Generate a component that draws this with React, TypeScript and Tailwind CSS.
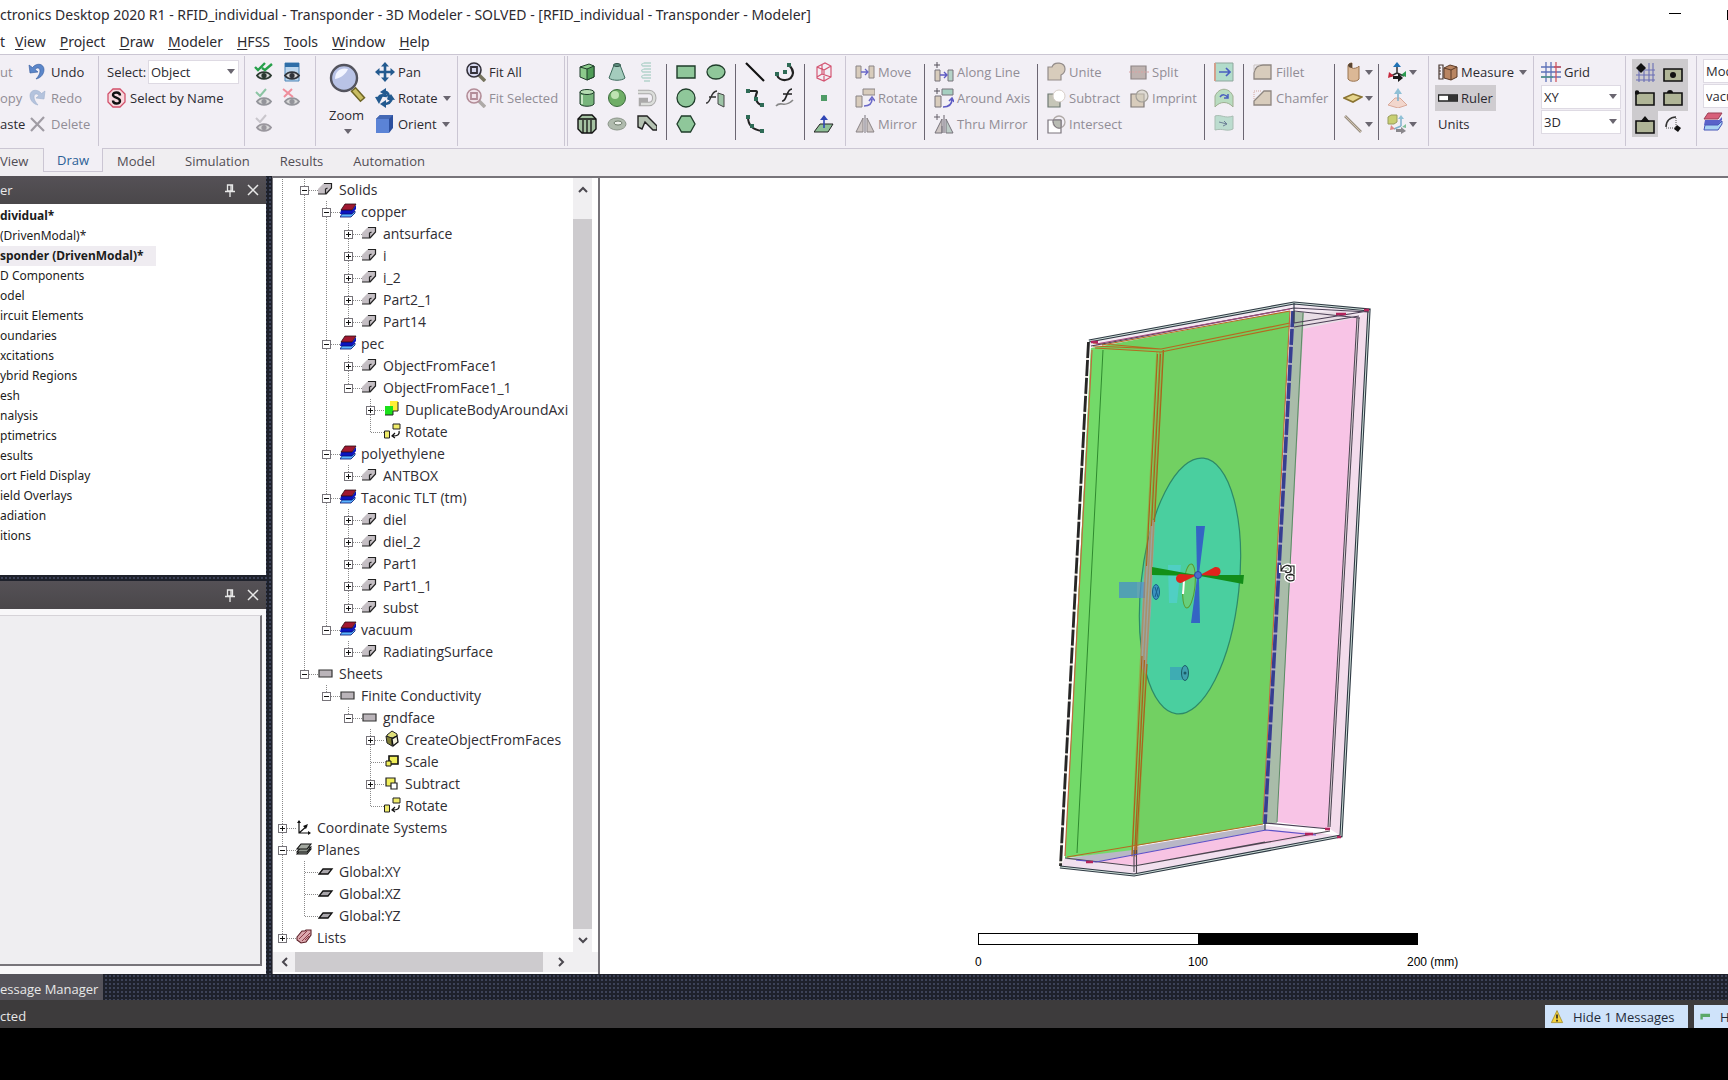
import { ReactNode } from 'react';
import clsx from 'clsx';

/* ---------- small helpers ---------- */

const Icon = ({ children, className = 'size-5' }: { children: ReactNode; className?: string }) => (
  <svg viewBox="0 0 20 20" className={clsx('shrink-0', className)} fill="none" aria-hidden="true">
    {children}
  </svg>
);

const Caret = ({ className = '' }: { className?: string }) => (
  <svg viewBox="0 0 8 5" className={clsx('h-[5px] w-2 shrink-0', className)} aria-hidden="true">
    <path d="M0 0h8L4 5z" fill="#6a6670" />
  </svg>
);

const Line = ({ dark }: { dark?: boolean }) => (
  <div className={clsx('w-px shrink-0', dark ? 'mt-[5px] h-[76px] bg-[#6b6672]' : '-mt-[3px] h-[90px] bg-[#cbc6d3]')} />
);

const Group = ({ className, children }: { className: string; children: ReactNode }) => (
  <div className={clsx('flex shrink-0', className)}>{children}</div>
);

const Col = ({ className = '', children }: { className?: string; children: ReactNode }) => (
  <div className={clsx('flex flex-col items-start', className)}>{children}</div>
);

type ToolProps = { icon?: ReactNode; label: string; muted?: boolean; caret?: boolean };

const Tool = ({ icon, label, muted, caret }: ToolProps) => (
  <button className={clsx('flex h-[26px] items-center gap-[3px] whitespace-nowrap', muted ? 'text-[#918d96]' : 'text-[#2c2a30]')}>
    {icon}
    <span>{label}</span>
    {caret && <Caret className="ml-0.5" />}
  </button>
);

const IconTool = ({ icon, label, caret }: { icon: ReactNode; label: string; caret?: boolean }) => (
  <button aria-label={label} className="flex h-[26px] items-center gap-0.5">
    {icon}
    {caret && <Caret />}
  </button>
);

const Combo = ({ label, value, className }: { label: string; value: string; className: string }) => (
  <div className={clsx('relative h-[25px]', className)}>
    <select aria-label={label} className="h-6 w-full appearance-none border border-[#dedae3] bg-white pl-0.5 text-[#2c2a30]">
      <option>{value}</option>
    </select>
    <Caret className="pointer-events-none absolute top-[9px] right-1" />
  </div>
);

/* ---------- ribbon icons ---------- */

const G = '#8fc79a';
const D = '#1f3d2a';

const undoIcon = (
  <Icon>
    <path d="M1 3l1 8 8-1-3-2.500c3-3 5-1 5 1.500 0 3-1.500 5-4 8 5-1 8-5 8-9.500C16 2 9 0 4.500 5.500z" fill="#5b86c9" stroke="#33599c" strokeWidth=".6" />
  </Icon>
);
const redoIcon = (
  <Icon>
    <path d="M17 3l-1 8-8-1 3-2.500c-3-3-5-1-5 1.500 0 3 1.500 5 4 8-5-1-8-5-8-9.500C2 2 9 0 13.500 5.500z" fill="#b4c3dd" stroke="#9fb0cc" strokeWidth=".6" />
  </Icon>
);
const deleteIcon = (
  <Icon>
    <path d="M3 4l13 13M16 3L3 17" stroke="#a09ca4" strokeWidth="2.200" />
  </Icon>
);
const byNameIcon = (
  <Icon>
    <path d="M6 1h7l5 5v8l-5 5H6l-5-5V6z" fill="#f7d9de" stroke="#d2506a" strokeWidth="1.300" />
    <path d="M13 7.500c0-4-7-4-7-.5 0 3 7 2.500 7 6 0 3.500-7 3.500-7-.5" stroke="#111" strokeWidth="2.400" />
  </Icon>
);

const Eye = ({ c }: { c: string }) => (
  <>
    <path d="M3 13.500c3-4.500 11-4.500 14 0-3 4.500-11 4.500-14 0z" fill="#d8d8d8" stroke={c} strokeWidth="1.900" />
    <circle cx="10" cy="13.500" r="2.600" fill={c} />
  </>
);
const showIcon = (
  <Icon>
    <Eye c="#2b3a30" />
    <path d="M1 5l3 3 7-7M8 6l3 2 7-6" stroke="#27a04a" strokeWidth="2.400" />
  </Icon>
);
const showMuted = (
  <Icon>
    <Eye c="#93949a" />
    <path d="M2 4l4 4 6-7" stroke="#8cc5a4" strokeWidth="2" />
  </Icon>
);
const hideMuted = (
  <Icon>
    <Eye c="#93949a" />
    <path d="M1 1l10 8M10 1L2 9" stroke="#ef8e9c" strokeWidth="2" />
  </Icon>
);
const showGrey = (
  <Icon>
    <Eye c="#9a979e" />
    <path d="M2 4l4 4 6-7" stroke="#c9c6cc" strokeWidth="2" />
  </Icon>
);
const windowEye = (
  <Icon>
    <path d="M3 1h14v18H3z" fill="#bcd6ee" stroke="#4d86b8" />
    <path d="M3 1h14v4H3z" fill="#2f6ea8" />
    <Eye c="#30343a" />
  </Icon>
);

const zoomIcon = (
  <svg viewBox="0 0 38 40" className="h-10 w-[38px]" fill="none" aria-hidden="true">
    <path d="M24 26l10 11" stroke="#6d6424" strokeWidth="7" />
    <path d="M25 27l8 9" stroke="#c9bd62" strokeWidth="4" />
    <circle cx="15" cy="15" r="13" fill="#b9c3e6" stroke="#54545e" strokeWidth="2.400" />
    <path d="M6 16C6 8 12 4 19 6c-2 5-7 9-13 10z" fill="#f3f5ff" />
  </svg>
);
const panIcon = (
  <Icon>
    <path d="M10 0l4 4.500h-2.700v4.200h4.200V6L20 10l-4.500 4v-2.700h-4.200v4.200H14L10 20l-4-4.500h2.700v-4.200H4.500V14L0 10l4.500-4v2.700h4.200V4.500H6z" fill="#235a8f" />
  </Icon>
);
const rotateIcon = (
  <Icon>
    <path d="M9 4c4 0 5 2 5 8M4 11c0-4 3-4 8-3M9 16c5 0 7-2 8-6" stroke="#235a8f" strokeWidth="2.800" />
    <path d="M5 4l6-4v8zM0 9l8-1-4 8zM12 11l4-5 4 6zM11 20l-6-4 6-4z" fill="#235a8f" />
  </Icon>
);
const orientIcon = (
  <Icon>
    <path d="M1 5l4-4h13v13l-4 5H1z" fill="#2c4f9e" />
    <path d="M1 5h13v14H1z" fill="#5b83d6" />
    <path d="M1 5l4-4h13l-4 4z" fill="#4569b5" />
  </Icon>
);
const FitIcon = ({ c, h, f }: { c: string; h: string; f: string }) => (
  <Icon>
    <path d="M12 12l7 7" stroke={h} strokeWidth="3.600" />
    <circle cx="8" cy="8" r="7" fill={f} stroke={c} strokeWidth="1.600" />
    <path d="M5 5h6v6H5z" stroke={c} strokeWidth="1.800" />
  </Icon>
);

const boxIcon = (
  <Icon>
    <path d="M3 5l9-3 5 2v11l-7 3-7-3z" fill="#8ccb8c" stroke={D} />
    <path d="M10 7l7-3v11l-7 3z" fill="#4f9c57" stroke={D} />
    <path d="M3 5l7 2" stroke={D} />
  </Icon>
);
const coneIcon = (
  <Icon>
    <path d="M7 3h6l5 13c-3 3-13 3-16 0z" fill="#a4ccbd" stroke="#3d6a5c" />
    <ellipse cx="10" cy="3" rx="3.500" ry="1.500" fill="#5f8f80" stroke="#2f5146" />
  </Icon>
);
const helixIcon = (
  <Icon>
    <path d="M7 1h7M5 4h9M7 7h7M5 10h9M7 13h7M5 16h9M7 19h6M7 1c-3 1-3 2-1 3M7 7c-3 1-3 2-1 3M7 13c-3 1-3 2-1 3" stroke="#b4d3cc" strokeWidth="1.300" />
  </Icon>
);
const cylinderIcon = (
  <Icon>
    <path d="M3 4v12c2 3 12 3 14 0V4z" fill="#78b57c" stroke={D} />
    <path d="M5 7v9" stroke="#c7e6c4" strokeWidth="2" />
    <ellipse cx="10" cy="4" rx="7" ry="2.500" fill="#b5dcb2" stroke={D} />
  </Icon>
);
const sphereIcon = (
  <Icon>
    <circle cx="10" cy="10" r="8.500" fill="#6fae66" stroke="#3b6b3c" />
    <circle cx="8" cy="7" r="4" fill="#bfe3b2" />
  </Icon>
);
const bendIcon = (
  <Icon>
    <path d="M1 4h11c7 0 7 12 0 12H4v-4h7" stroke="#aaa9a9" strokeWidth="4.500" />
    <path d="M1 4h11c7 0 7 12 0 12H4" stroke="#dcdedb" strokeWidth="2.500" />
  </Icon>
);
const polyIcon = (
  <Icon>
    <path d="M5 1h10l4 4v10l-4 4H5l-4-4V5z" fill="#a5c2a2" stroke="#111" strokeWidth="1.400" />
    <path d="M1 5h18M6 6v13M10 6v13M14 6v13" stroke="#111" strokeWidth="1.300" />
  </Icon>
);
const torusIcon = (
  <Icon>
    <ellipse cx="10" cy="10" rx="9" ry="6" fill="#b0bbae" stroke="#8c968a" />
    <ellipse cx="11" cy="9" rx="4" ry="2" fill="#eef1ec" stroke="#6d7b6b" />
  </Icon>
);
const sweepIcon = (
  <Icon>
    <path d="M1 2h9l10 10v4h-4L8 8l-3 7-4-2z" fill="#b4c1b1" stroke="#222" strokeWidth="1.400" />
  </Icon>
);
const rectIcon = (
  <Icon>
    <path d="M1 4h18v12H1z" fill={G} stroke={D} strokeWidth="1.400" />
  </Icon>
);
const ellipseIcon = (
  <Icon>
    <ellipse cx="10" cy="10" rx="9" ry="7" fill={G} stroke={D} strokeWidth="1.300" />
  </Icon>
);
const circleIcon = (
  <Icon>
    <circle cx="10" cy="10" r="9" fill={G} stroke={D} strokeWidth="1.300" />
  </Icon>
);
const funcSurfIcon = (
  <Icon>
    <path d="M0 15c5 1 4-12 11-12M3 9h7" stroke="#333" strokeWidth="1.400" />
    <path d="M12 5l6 2v12l-6-3z" fill="#9fc5a8" stroke="#444" />
  </Icon>
);
const hexIcon = (
  <Icon>
    <path d="M5.500 2h9L19 10l-4.500 8h-9L1 10z" fill={G} stroke={D} strokeWidth="1.300" />
  </Icon>
);
const lineIcon = (
  <Icon>
    <path d="M1 1l18 18" stroke="#111" strokeWidth="2.200" />
  </Icon>
);
const arcIcon = (
  <Icon>
    <path d="M2 13c2 7 15 7 16-2 0-4-2-6-4-8" stroke="#222" strokeWidth="2.200" />
    <path d="M0 10h4v4H0zM8 8h4v4H8zM12 1h4v4h-4z" fill="#2f6b56" />
  </Icon>
);
const splineIcon = (
  <Icon>
    <path d="M3 3h8c3 1-2 4 0 8 1 4 3 6 7 6" stroke="#222" strokeWidth="2.200" />
    <path d="M1 1h4v4H1zM9 9h4v4H9zM15 15h4v4h-4z" fill="#2f6b56" />
  </Icon>
);
const funcCurveIcon = (
  <Icon>
    <path d="M7 13c5 1 4-12 10-12M8 6h9" stroke="#222" strokeWidth="1.600" />
    <path d="M1 18c5-6 8 3 17-6" stroke="#888" strokeWidth="1.600" />
  </Icon>
);
const arc3Icon = (
  <Icon>
    <path d="M3 3c0 9 6 13 14 14" stroke="#222" strokeWidth="2" />
    <path d="M1 1h4v4H1zM5 10h4v4H5zM15 15h4v4h-4z" fill="#2f6b56" />
  </Icon>
);
const regionIcon = (
  <Icon>
    <path d="M3 5l8-4 6 3v11l-7 4-7-3zM3 5l7 3 7-4M10 8v11M3 15l5-3M8 3v9l9 3" stroke="#d45572" strokeWidth="1.200" />
  </Icon>
);
const pointIcon = (
  <Icon>
    <path d="M7 7h6v6H7z" fill="#4f9b66" />
  </Icon>
);
const planeIcon = (
  <Icon>
    <path d="M6 10h13l-5 8H0z" fill="#8fbf97" stroke="#222" />
    <path d="M10 14V4" stroke="#2f45b5" strokeWidth="1.600" />
    <path d="M6 6l4-5 4 5z" fill="#2f45b5" />
  </Icon>
);

const T = '#d8ccbc';
const moveIcon = (
  <Icon>
    <path d="M1 4h5v12H1zM14 4h5v12h-5z" fill={T} stroke="#8a8486" />
    <path d="M6 10h7M10 7l3 3-3 3" stroke="#6a68c8" strokeWidth="1.300" />
  </Icon>
);
const turnIcon = (
  <Icon>
    <path d="M1 8h6v11H1zM8 1h12v6H8z" fill={T} stroke="#8a8486" />
    <path d="M9 18c6 0 8-3 8-7M14 13l3-4 3 4" stroke="#6a68c8" strokeWidth="1.600" />
  </Icon>
);
const mirrorIcon = (
  <Icon>
    <path d="M8 4v14H1zM12 4v14h7z" fill="#cdc5c3" stroke="#8a8486" />
    <path d="M10 1v18" stroke="#77727a" />
  </Icon>
);
const alongIcon = (
  <Icon>
    <path d="M1 8h5v11H1z" fill={T} stroke="#77727a" />
    <path d="M14 8h5v11h-5z" fill="#b5d3c8" stroke="#77727a" />
    <path d="M3 0v6M0 3h6" stroke="#55505a" />
    <path d="M6 13h7M10 10l3 3-3 3" stroke="#5d5bc4" strokeWidth="1.400" />
  </Icon>
);
const aroundIcon = (
  <Icon>
    <path d="M1 8h6v11H1z" fill={T} stroke="#77727a" />
    <path d="M8 1h11v6H8z" fill="#a6cfc0" stroke="#77727a" />
    <path d="M3 0v6M0 3h6" stroke="#55505a" />
    <path d="M9 19c7 0 9-4 9-8M15 13l3-3 2 4" stroke="#5d5bc4" strokeWidth="1.600" />
  </Icon>
);
const thruIcon = (
  <Icon>
    <path d="M8 5v14H1zM8 12v7" fill="#cdc5c3" stroke="#77727a" />
    <path d="M12 5v14h7z" fill="#bccbc6" stroke="#77727a" />
    <path d="M10 1v18M3 0v6M0 3h6" stroke="#66616b" />
  </Icon>
);
const uniteIcon = (
  <Icon>
    <path d="M2 5h4c2-6 13-5 13 2 0 3-2 5-4 6v5H2z" fill={T} stroke="#938c8a" strokeWidth="1.200" />
  </Icon>
);
const subtractIcon = (
  <Icon>
    <path d="M2 6h6c-1 5 2 8 6 8v5H2z" fill="#c6c6b8" stroke="#6f7a74" strokeWidth="1.200" />
    <circle cx="13" cy="8" r="6" fill="#fff" stroke="#d8cfc8" />
  </Icon>
);
const intersectIcon = (
  <Icon>
    <path d="M2 6h13v13H2z" fill="#fff" stroke="#7b757d" strokeWidth="1.200" />
    <circle cx="13" cy="8" r="6" stroke="#b0aaa8" strokeWidth="1.300" />
    <path d="M7 6h8v8c-5 1-8-3-8-8z" fill="#b9bcb3" stroke="#7b757d" />
  </Icon>
);
const splitIcon = (
  <Icon>
    <path d="M2 4h15v13H2z" fill="#bfb3b0" stroke="#8e8586" strokeWidth="1.200" />
    <path d="M0 10h20" stroke="#d9a3a3" strokeDasharray="2 1" />
  </Icon>
);
const imprintIcon = (
  <Icon>
    <path d="M2 6h13v13H2z" fill={T} stroke="#7f7877" strokeWidth="1.200" />
    <circle cx="13" cy="8" r="6" fill="#d3cfc0" fillOpacity=".6" stroke="#a29f98" strokeWidth="1.200" />
  </Icon>
);
const faceMoveIcon = (
  <Icon>
    <path d="M1 1h18v18H1z" fill="#b2dccb" stroke="#8fa79d" />
    <path d="M1 1v18" stroke="#d3a08c" strokeWidth="2" />
    <path d="M5 10h11M12 6l4 4-4 4" stroke="#4a5fc0" strokeWidth="1.700" />
  </Icon>
);
const faceOffsetIcon = (
  <Icon>
    <path d="M1 8C5-1 15-1 19 8v11c-5-6-13-6-18 0z" fill="#b9dcc0" stroke="#9fae92" />
    <path d="M6 9c2-3 6-3 8 1M14 6v4h-4" stroke="#4a5fc0" strokeWidth="1.500" />
  </Icon>
);
const faceAlongIcon = (
  <Icon>
    <path d="M1 2c6-2 10 3 18 0v13c-6 3-10-1-18 1z" fill="#bcdccf" stroke="#a9bdb3" />
    <path d="M5 8l8 2M10 7l3 3-4 2" stroke="#6c7f96" />
  </Icon>
);
const filletIcon = (
  <Icon>
    <path d="M1 17V11c1-6 5-8 9-8h8v14z" fill={T} stroke="#8e8680" strokeWidth="1.300" />
    <path d="M1 9V3h6" stroke="#c9c2c0" />
  </Icon>
);
const chamferIcon = (
  <Icon>
    <path d="M1 17v-4L11 3h7v14z" fill={T} stroke="#8e8680" strokeWidth="1.300" />
    <path d="M1 11V3h8" stroke="#d3a9a0" strokeDasharray="1 1" />
  </Icon>
);
const tubeIcon = (
  <Icon>
    <path d="M5 4v13c2 3 9 3 11 0V4c-1 2-6 3-7 2V1c-2 0-4 1-4 3z" fill="#dbb896" stroke="#9a7450" />
    <path d="M5 3c1-2 3-2 4-2v5c-2 0-4-1-4-3z" fill="#5a4634" />
  </Icon>
);
const sheetIcon = (
  <Icon>
    <path d="M1 10l9-4 9 3-9 5z" fill="#e6d58c" stroke="#8b7432" strokeWidth="1.600" />
  </Icon>
);
const wireIcon = (
  <Icon>
    <path d="M2 2l16 16" stroke="#9a8f83" strokeWidth="2.600" />
    <path d="M2 2l16 16" stroke="#cfc3ae" />
  </Icon>
);
const csIcon = (
  <Icon>
    <path d="M10 11V3M10 11l-6 3M10 11l7 3" stroke="#333" strokeWidth="1.500" />
    <path d="M6 5l4-5 4 5z" fill="#1f72b5" />
    <path d="M1 16l1-6 5 4z" fill="#c7283c" />
    <path d="M19 15V9l-5 4z" fill="#2b9a50" />
    <path d="M6 14h5v-3l5 5-5 4v-3H6z" fill="#1a1a1a" />
  </Icon>
);
const csMuted = (
  <Icon>
    <path d="M1 17l7-7h5l7 7-9 3z" fill="#f2d6cc" stroke="#d9a898" />
    <path d="M11 13V4" stroke="#7fb1cc" strokeWidth="1.600" />
    <path d="M7 6l4-6 4 6z" fill="#8fc0d6" />
  </Icon>
);
const csFaceIcon = (
  <Icon>
    <path d="M1 3l3-2h6v7l-3 2H1z" fill="#c8cf72" stroke="#989b5e" />
    <path d="M14 12V4M14 12l-7 3" stroke="#7fb1cc" strokeWidth="1.500" />
    <path d="M11 5l3-4 3 4z" fill="#8fc0d6" />
    <path d="M9 15h5v-2l5 4-5 3v-2H9z" fill="#8a878c" />
    <path d="M3 16l1-5 4 4z" fill="#d88" />
    <path d="M19 14v-4l-4 3z" fill="#7fc09a" />
  </Icon>
);
const measureIcon = (
  <Icon>
    <path d="M1 3h4v14H1zM1 6h2M1 9h2M1 12h2" stroke="#4b3b34" strokeWidth="1.200" />
    <path d="M6 6l6-3 7 2v10l-6 3-7-2z" fill="#b98562" stroke="#5b3b28" />
    <path d="M6 6l7 2 6-3M13 8v10" stroke="#5b3b28" />
  </Icon>
);
const rulerIcon = (
  <Icon>
    <path d="M.5 7h19v6H.5z" fill="#fff" stroke="#222" strokeWidth="1.400" />
    <path d="M10 7h9.500v6H10z" fill="#333" />
  </Icon>
);
const gridIcon = (
  <Icon>
    <path d="M0 5h20M0 10h20M0 15h20" stroke="#5d72b8" strokeWidth="1.300" />
    <path d="M5 0v20M10 0v20" stroke="#5d72b8" strokeWidth="1.300" />
    <path d="M15 0v20M13 5h7" stroke="#cf5560" strokeWidth="1.300" />
    <path d="M0 15h12" stroke="#4c9a7c" strokeWidth="1.300" />
  </Icon>
);
const stackIcon = (
  <Icon>
    <path d="M5 1h14l-4 6H1z" fill="#d8607a" stroke="#9b4056" />
    <path d="M2 8h14l3-3v3l-4 5H1z" fill="#5a62c9" />
    <path d="M2 13h13l4-4v3l-4 6H1z" fill="#a8d2f2" stroke="#4656b8" />
  </Icon>
);

const snapBox = <path d="M1 5h18v12H1z" fill="#b0b597" stroke="#111" strokeWidth="1.600" />;
const snapGrid = (
  <Icon>
    <path d="M1 13h19M1 18h19M4 8v12M9 4v16M14 1v19M18 1v19M10 8h10" stroke="#6a6fb5" strokeWidth="1.100" />
    <path d="M6 1l5 5-5 5-5-5z" fill="#111" />
  </Icon>
);
const snapCenter = (
  <Icon>
    <path d="M1 7h18v12H1z" fill="#b0b597" stroke="#111" strokeWidth="1.600" />
    <circle cx="10" cy="13" r="3" fill="#111" />
  </Icon>
);
const snapVertex = (
  <Icon>
    {snapBox}
    <circle cx="2" cy="4.500" r="2.200" fill="#111" />
  </Icon>
);
const snapEdge = (
  <Icon>
    {snapBox}
    <path d="M4 5a3 3 0 0 1 6 0z" fill="#111" />
  </Icon>
);
const snapMid = (
  <Icon>
    <path d="M1 7h18v12H1z" fill="#b0b597" stroke="#111" strokeWidth="1.600" />
    <path d="M5 8l5-6 5 6z" fill="#111" />
  </Icon>
);
const snapArc = (
  <Icon>
    <path d="M3 13C3 7 7 3 13 3" stroke="#333" strokeWidth="1.500" />
    <path d="M3 14h9M13 4v9" stroke="#555" strokeDasharray="1 1" />
    <path d="M14 11l4 3-3 4-4-3z" fill="#111" />
  </Icon>
);

/* ---------- tree ---------- */

const solidIcon = (
  <Icon>
    <path d="M0 14V9l6-6h8v5l-6 6z" fill="#c5bfc4" />
    <path d="M6 3.500h7.500V8L8 14M0 14h8M7.500 14V9l2-1" stroke="#222" strokeWidth="1.200" />
  </Icon>
);
const materialIcon = (
  <Icon>
    <path d="M1 8h11l4-5v4l-4 5H0z" fill="#0b14c0" />
    <path d="M5 2h11l-4 6H1z" fill="#a01830" stroke="#2b0a12" strokeWidth=".8" />
    <path d="M2 12h10l3-3v2l-4 4H0z" fill="#5cb4ff" stroke="#061070" strokeWidth=".8" />
  </Icon>
);
const sheetRowIcon = (
  <Icon>
    <path d="M1 6h13v7H1z" fill="#bab4b9" stroke="#333" strokeWidth="1.200" />
  </Icon>
);
const duplicateIcon = (
  <Icon>
    <path d="M6 1h8v10H6z" fill="#ffee33" />
    <path d="M1 6h8v9H1z" fill="#1be01b" />
    <path d="M1 15h8v-4h5V2" stroke="#222" />
  </Icon>
);
const rotateRowIcon = (
  <Icon>
    <path d="M0.500 9h5v7h-5zM9 2h7v5H9z" fill="#f0ec6a" stroke="#222" />
    <path d="M15 9c1 4-2 5-6 5M11 11l-3 3 3 2" stroke="#111" strokeWidth="1.200" />
  </Icon>
);
const facesIcon = (
  <Icon>
    <path d="M3 5l5-4 5 3v2L8 8 3 7z" fill="#dfe07a" stroke="#222" />
    <path d="M2 6l6 2v8l-5-3z" fill="#7d7c35" stroke="#222" />
    <path d="M8 9l5-3 1 6-5 4z" fill="#f3f2dc" stroke="#111" strokeWidth="1.300" />
  </Icon>
);
const scaleIcon = (
  <Icon>
    <path d="M5 4h9v8H5z" fill="#f0ee5a" stroke="#111" strokeWidth="1.600" />
    <path d="M2 9h5v5H2z" fill="#f0ee5a" stroke="#111" />
  </Icon>
);
const subtractRowIcon = (
  <Icon>
    <path d="M2 4h9v8H2z" fill="#f0ee5a" stroke="#222" strokeWidth="1.200" />
    <path d="M7 9h6v6H7z" fill="#fff" stroke="#222" strokeWidth="1.200" />
  </Icon>
);
const axesIcon = (
  <Icon>
    <path d="M3 3v12h11M3 15l8-7" stroke="#111" strokeWidth="1.200" />
    <path d="M1 5l2-3 2 3zM12 13l3 2-3 2zM7 8l5-2-2 5z" fill="#111" />
  </Icon>
);
const planesIcon = (
  <Icon>
    <path d="M5 9h10l-4 5H1z" fill="#8e948c" stroke="#111" strokeWidth="1.100" />
    <path d="M5 7h10l-4 5H1z" fill="#8e948c" stroke="#111" strokeWidth="1.100" />
    <path d="M5 4h10l-4 5H1z" fill="#a2a79f" stroke="#111" strokeWidth="1.100" />
  </Icon>
);
const planeRowIcon = (
  <Icon>
    <path d="M5 7h9l-4 5H1z" fill="#a9a6ab" stroke="#111" strokeWidth="1.300" />
  </Icon>
);
const listsIcon = (
  <Icon>
    <path d="M1 9l5-6h3l1-1h5v5l-5 7-5 1-4-3z" fill="#dba7ad" stroke="#5b1f27" strokeWidth="1.100" />
    <path d="M3 11l8-8M6 13l8-8M9 12l4-4" stroke="#8c3b46" />
  </Icon>
);

type Node = { label: string; icon: ReactNode; closed?: boolean; children?: Node[] };

const solid = (label: string): Node => ({ label, icon: solidIcon, closed: true });

const modelNodes: Node[] = [
  {
    label: 'Solids',
    icon: solidIcon,
    children: [
      { label: 'copper', icon: materialIcon, children: ['antsurface', 'i', 'i_2', 'Part2_1', 'Part14'].map(solid) },
      {
        label: 'pec',
        icon: materialIcon,
        children: [
          solid('ObjectFromFace1'),
          {
            label: 'ObjectFromFace1_1',
            icon: solidIcon,
            children: [
              { label: 'DuplicateBodyAroundAxi', icon: duplicateIcon, closed: true },
              { label: 'Rotate', icon: rotateRowIcon },
            ],
          },
        ],
      },
      { label: 'polyethylene', icon: materialIcon, children: [solid('ANTBOX')] },
      { label: 'Taconic TLT (tm)', icon: materialIcon, children: ['diel', 'diel_2', 'Part1', 'Part1_1', 'subst'].map(solid) },
      { label: 'vacuum', icon: materialIcon, children: [solid('RadiatingSurface')] },
    ],
  },
  {
    label: 'Sheets',
    icon: sheetRowIcon,
    children: [
      {
        label: 'Finite Conductivity',
        icon: sheetRowIcon,
        children: [
          {
            label: 'gndface',
            icon: sheetRowIcon,
            children: [
              { label: 'CreateObjectFromFaces', icon: facesIcon, closed: true },
              { label: 'Scale', icon: scaleIcon },
              { label: 'Subtract', icon: subtractRowIcon, closed: true },
              { label: 'Rotate', icon: rotateRowIcon },
            ],
          },
        ],
      },
    ],
  },
];

const rootNodes: Node[] = [
  { label: 'Coordinate Systems', icon: axesIcon, closed: true },
  {
    label: 'Planes',
    icon: planesIcon,
    children: ['Global:XY', 'Global:XZ', 'Global:YZ'].map((label) => ({ label, icon: planeRowIcon })),
  },
  { label: 'Lists', icon: listsIcon, closed: true },
];

const Branch = ({ mark, last }: { mark?: '+' | '-'; last: boolean }) => (
  <svg viewBox="0 0 22 22" className="h-[22px] w-[22px] shrink-0" fill="none" shapeRendering="crispEdges" aria-hidden="true">
    <path d={last ? 'M8.500 0v11' : 'M8.500 0v22'} stroke="#8a8a8a" strokeDasharray="1 1" />
    <path d="M9 11.500h13" stroke="#8a8a8a" strokeDasharray="1 1" />
    {mark && <path d="M4.500 7.500h8v8h-8z" fill="#fff" stroke="#77747a" />}
    {mark && <path d="M6 11.500h5" stroke="#111" />}
    {mark === '+' && <path d="M8.500 9v5" stroke="#111" />}
  </svg>
);

const Rows = ({ nodes, guides }: { nodes: Node[]; guides: boolean[] }) => (
  <ul>
    {nodes.map((node, i) => {
      const last = i === nodes.length - 1;
      return (
        <li key={node.label}>
          <div className="flex h-[22px] items-center whitespace-nowrap">
            {guides.map((on, g) => (
              <svg key={g} viewBox="0 0 22 22" className="h-[22px] w-[22px] shrink-0" shapeRendering="crispEdges" aria-hidden="true">
                {on && <path d="M8.500 0v22" stroke="#8a8a8a" strokeDasharray="1 1" />}
              </svg>
            ))}
            <Branch mark={node.closed ? '+' : node.children ? '-' : undefined} last={last} />
            {node.icon}
            <span className="pl-px">{node.label}</span>
          </div>
          {node.children && <Rows nodes={node.children} guides={[...guides, !last]} />}
        </li>
      );
    })}
  </ul>
);

/* ---------- docked panels ---------- */

const projectItems = [
  'D Components',
  'odel',
  'ircuit Elements',
  'oundaries',
  'xcitations',
  'ybrid Regions',
  'esh',
  'nalysis',
  'ptimetrics',
  'esults',
  'ort Field Display',
  'ield Overlays',
  'adiation',
  'itions',
];

const PanelHeader = ({ title }: { title?: string }) => (
  <div className="flex h-7 shrink-0 items-center bg-linear-to-b from-[#555156] to-[#4a474a] text-[13px] text-[#e8e8e8]">
    <span className="grow">{title}</span>
    <button aria-label="Pin" className="mr-[7px] size-4">
      <svg viewBox="0 0 16 16" fill="none" stroke="#e8e8e8" strokeWidth="1.300" aria-hidden="true">
        <path d="M5.500 3h5v6h-5zM9 3v6M3 9.500h10M8 10v5" />
      </svg>
    </button>
    <button aria-label="Close" className="mr-[5px] size-4">
      <svg viewBox="0 0 16 16" fill="none" stroke="#e8e8e8" strokeWidth="1.500" aria-hidden="true">
        <path d="M3 3l10 10M13 3L3 13" />
      </svg>
    </button>
  </div>
);

/* ---------- 3D view ---------- */

const Model = () => (
  <svg viewBox="600 178 1128 796" className="absolute inset-0 h-full w-full" fill="none" aria-label="3D model">
    {/* lid, outer shell and right side */}
    <path d="M1089 341L1294 303l75 7-10 8-65-7-203 37z" fill="#f5eaf4" />
    <path d="M1359 317l10-7-28 526-11-7z" fill="#f3dcec" />
    <path d="M1303 313l56 5-29 511-53-7z" fill="#f8c4e6" />
    <path d="M1303 313l40-2 16 6-56 12z" fill="#e9dde6" />
    <path d="M1293 312h11l-27 511-12 1z" fill="#a9bca9" />
    {/* bottom */}
    <path d="M1060 867l5-9 200-33 76 11-207 39z" fill="#f1e0ee" />
    <path d="M1092 862l173-32 60 4-190 31z" fill="#f7c3e3" />
    <path d="M1065 859l200-34v5l-170 32z" fill="#b9b7c6" />
    {/* green faces */}
    <path d="M1091 348l199-37-27 513-198 34z" fill="#72d062" />
    <path d="M1091 348l68 4-26 498-68 8z" fill="#73da69" />
    <path d="M1103 350l-26 503" stroke="#2f8a2f" />
    {/* disc */}
    <ellipse cx="1190" cy="586" rx="49" ry="128.500" transform="rotate(6 1190 586)" fill="#4acf9f" stroke="#2d8a68" strokeWidth="1.200" />
    <path d="M1151 520l4 0-4 90-5 65-6-10 3-80z" fill="#9ba6a3" />
    <path d="M1119 582h18v16h-18z" fill="#4c97bf" opacity=".85" />
    <path d="M1137 582h8v16h-8z" fill="#5a8fd0" opacity=".7" />
    <ellipse cx="1156" cy="592" rx="3.500" ry="7.500" fill="#3b93c0" stroke="#175f8c" />
    <path d="M1155 587l3 10M1158 587l-3 10" stroke="#175f8c" />
    <path d="M1168 565h13l-4 38h-8z" fill="#52cfd3" opacity=".7" />
    <path d="M1170 667h14v13h-14z" fill="#3ba3b8" opacity=".8" />
    <ellipse cx="1185" cy="673" rx="3.500" ry="7.500" fill="#3f9fae" stroke="#1b5c66" />
    <circle cx="1185" cy="673" r="1.500" fill="#1b5c66" />
    <ellipse cx="1189" cy="586" rx="6" ry="22" transform="rotate(6 1189 586)" fill="#66cf7c" stroke="#5a9a2f" />
    <path d="M1183 580l2 0-1 14h-2z" fill="#fff" />
    {/* origin arrows */}
    <path d="M1196 526h9l-6 48h-2z" fill="#3465c4" />
    <path d="M1197 578h2l1 45h-9z" fill="#3465c4" />
    <path d="M1152 567v8l44 1v-1z" fill="#129018" />
    <path d="M1200 575l44 0-1 9-43-8z" fill="#128c18" />
    <path d="M1197 575l-17-1a4.500 4.500 0 1 0 1 9z" fill="#e0231c" />
    <path d="M1200 575l15-8a4.500 4.500 0 1 1 2 9z" fill="#e0231c" />
    <circle cx="1198" cy="575" r="3.500" fill="#4a6fc9" stroke="#2a4aa0" />
    {/* orange edges */}
    <path d="M1157 352l-18 340-7 165M1160 352l-18 340-7 165M1163 350l-18 340-8 165" stroke="#b5792a" strokeWidth="1.600" opacity=".45" />
    <path d="M1157.500 354l-9 172-2 40M1160.500 354l-9 172M1163.500 350l-9 172M1142 656l-10 200M1144.500 660l-10 196M1147 664l-11 190" stroke="#a8641c" strokeWidth="1.200" />
    <path d="M1093 346l68 3 129-26M1095 348l66 4 129-26M1093 343l68 6M1102 345l188-34M1067 857l196-33" stroke="#b56a20" strokeWidth="1.200" />
    <path d="M1290 311l-27 511M1092 350l-27 506" stroke="#c2683f" strokeWidth="1.200" />
    {/* blue dashed edge */}
    <path d="M1293 311l-28 513" stroke="#a9a6c4" strokeWidth="3.600" />
    <path d="M1293 311l-28 513" stroke="#363e90" strokeWidth="3.600" strokeDasharray="16 2" />
    <path d="M1303 313l-26 509" stroke="#5d8a66" />
    {/* shell outlines, drawn as a dark line with a light core */}
    <path d="M1089 341L1294 303l75 7-28 526-207 39-74-8" stroke="#2f3a44" strokeWidth="3.200" />
    <path d="M1089 341L1294 303l75 7-28 526-207 39-74-8" stroke="#cfe0da" strokeWidth="1" />
    <path d="M1358 318l-29 509" stroke="#4a4450" strokeWidth="3" />
    <path d="M1358 318l-29 509" stroke="#d9d0d6" strokeWidth="1" />
    <path d="M1091 346L1294 308l75 4M1294 311l66 7M1330 829l-65-6M1294 323l74-12M1294 327l65-11" stroke="#4c3f56" strokeWidth="1.200" />
    <path d="M1096 344l194-35" stroke="#a54a80" />
    <path d="M1088.500 342l-28 524" stroke="#f0ece6" strokeWidth="3" />
    <path d="M1088.500 342l-28 524" stroke="#262626" strokeWidth="2.800" strokeDasharray="16 2" />
    <path d="M1134 872v-22M1136.500 874v-24M1065 858l69 8 196-35M1134 866l131-24" stroke="#4b4650" strokeWidth="1.100" />
    <path d="M1096 862l170-32 50 5M1096 862l-20-2" stroke="#5a50c8" strokeWidth="1.200" />
    <path d="M1294 303v20M1265 824v6" stroke="#3a4550" strokeWidth="1.200" />
    <path d="M1091 342h7M1336 314h10M1364 310h5M1305 834h8M1086 862h7M1337 837h4M1325 829h5" stroke="#b2245c" strokeWidth="2.600" />
    {/* rotate cursor */}
    <path d="M1281 565v6h6M1281 571c3-7 9-7 10-3 1 5-3 5-6 4M1294 580v-5h-7M1294 580c-4 2-8 0-8-3 1-3 6-4 8-1M1288 566h6v8" stroke="#fff" strokeWidth="4" />
    <path d="M1281 565v6h6M1281 571c3-7 9-7 10-3 1 5-3 5-6 4M1294 580v-5h-7M1294 580c-4 2-8 0-8-3 1-3 6-4 8-1M1288 566h6v8" stroke="#222" strokeWidth="1.200" />
  </svg>
);

/* ---------- page ---------- */

const menus = ['View', 'Project', 'Draw', 'Modeler', 'HFSS', 'Tools', 'Window', 'Help'];

const texture = 'bg-[#1e212b] bg-[radial-gradient(#3d4358_1px,transparent_1px)] bg-[length:4px_4px]';

const App = () => (
  <div className="flex min-h-screen w-full flex-col overflow-hidden bg-black font-['Open_Sans','Noto_Sans',sans-serif] text-[13px] leading-5 text-[#2c2a30]">
    <header className="bg-white font-['Noto_Sans','Open_Sans',sans-serif] text-[14px]">
      <div className="flex h-[30px] items-center">
        <h1 className="grow whitespace-nowrap">
          ctronics Desktop 2020 R1 - RFID_individual - Transponder - 3D Modeler - SOLVED - [RFID_individual - Transponder - Modeler]
        </h1>
        <button aria-label="Minimize" className="mb-1 h-px w-3 bg-black" />
        <button aria-label="Maximize" className="ml-[46px] h-[10px] w-px bg-black" />
      </div>
      <nav className="flex h-6 items-center">
        <span className="w-[15px]">t</span>
        <div className="flex gap-[14px]">
          {menus.map((m) => (
            <button key={m}>
              <u className="underline-offset-2">{m[0]}</u>
              {m.slice(1)}
            </button>
          ))}
        </div>
      </nav>
    </header>

    {/* ribbon */}
    <div className="flex h-[95px] shrink-0 overflow-hidden border-y border-[#cbc6d3] bg-[#f2eff5] pt-1">
      <Group className="w-[98px]">
        <Col className="w-7">
          <Tool label="ut" muted />
          <Tool label="opy" muted />
          <Tool label="aste" />
        </Col>
        <Col>
          <Tool icon={undoIcon} label="Undo" />
          <Tool icon={redoIcon} label="Redo" muted />
          <Tool icon={deleteIcon} label="Delete" muted />
        </Col>
      </Group>
      <Line />
      <Group className="w-[145px] pl-2">
        <Col>
          <label className="flex h-[26px] items-center whitespace-nowrap">
            <span className="w-[41px]">Select:</span>
            <Combo label="Selection mode" value="Object" className="w-[91px]" />
          </label>
          <Tool icon={byNameIcon} label="Select by Name" />
        </Col>
      </Group>
      <Line />
      <Group className="w-[70px] gap-2 pl-[9px]">
        <Col>
          <IconTool icon={showIcon} label="Show selection" />
          <IconTool icon={showMuted} label="Show in active view" />
          <IconTool icon={showGrey} label="Show all" />
        </Col>
        <Col>
          <IconTool icon={windowEye} label="Active view visibility" />
          <IconTool icon={hideMuted} label="Hide selection" />
        </Col>
      </Group>
      <Line />
      <Group className="w-[141px] pl-[13px]">
        <button className="flex w-[46px] flex-col items-start pt-1">
          {zoomIcon}
          <span className="mt-0.5">Zoom</span>
          <Caret className="mt-1 ml-[15px]" />
        </button>
        <Col>
          <Tool icon={panIcon} label="Pan" />
          <Tool icon={rotateIcon} label="Rotate" caret />
          <Tool icon={orientIcon} label="Orient" caret />
        </Col>
      </Group>
      <Line />
      <Group className="w-[106px] pl-2">
        <Col>
          <Tool icon={<FitIcon c="#33303a" h="#77745f" f="#d5d7ee" />} label="Fit All" />
          <Tool icon={<FitIcon c="#b38d98" h="#aeaaa8" f="#f1e3ea" />} label="Fit Selected" muted />
        </Col>
      </Group>
      <Line />
      <Group className="w-0.5">{null}</Group>
      <Line />
      <Group className="w-[98px] gap-[10px] pl-[9px]">
        <Col>
          <IconTool icon={boxIcon} label="Box" />
          <IconTool icon={cylinderIcon} label="Cylinder" />
          <IconTool icon={polyIcon} label="Regular polyhedron" />
        </Col>
        <Col>
          <IconTool icon={coneIcon} label="Cone" />
          <IconTool icon={sphereIcon} label="Sphere" />
          <IconTool icon={torusIcon} label="Torus" />
        </Col>
        <Col>
          <IconTool icon={helixIcon} label="Helix" />
          <IconTool icon={bendIcon} label="Spiral" />
          <IconTool icon={sweepIcon} label="Bondwire" />
        </Col>
      </Group>
      <Line dark />
      <Group className="w-[68px] gap-[10px] pl-[9px]">
        <Col>
          <IconTool icon={rectIcon} label="Rectangle" />
          <IconTool icon={circleIcon} label="Circle" />
          <IconTool icon={hexIcon} label="Regular polygon" />
        </Col>
        <Col>
          <IconTool icon={ellipseIcon} label="Ellipse" />
          <IconTool icon={funcSurfIcon} label="Equation surface" />
        </Col>
      </Group>
      <Line dark />
      <Group className="w-[68px] gap-[10px] pl-[9px]">
        <Col>
          <IconTool icon={lineIcon} label="Line" />
          <IconTool icon={splineIcon} label="Spline" />
          <IconTool icon={arc3Icon} label="Three point arc" />
        </Col>
        <Col>
          <IconTool icon={arcIcon} label="Center point arc" />
          <IconTool icon={funcCurveIcon} label="Equation curve" />
        </Col>
      </Group>
      <Line dark />
      <Group className="w-10 pl-[9px]">
        <Col>
          <IconTool icon={regionIcon} label="Region" />
          <IconTool icon={pointIcon} label="Point" />
          <IconTool icon={planeIcon} label="Plane" />
        </Col>
      </Group>
      <Line />
      <Group className="w-[78px] pl-[9px]">
        <Col>
          <Tool icon={moveIcon} label="Move" muted />
          <Tool icon={turnIcon} label="Rotate" muted />
          <Tool icon={mirrorIcon} label="Mirror" muted />
        </Col>
      </Group>
      <Line dark />
      <Group className="w-[112px] pl-[9px]">
        <Col>
          <Tool icon={alongIcon} label="Along Line" muted />
          <Tool icon={aroundIcon} label="Around Axis" muted />
          <Tool icon={thruIcon} label="Thru Mirror" muted />
        </Col>
      </Group>
      <Line dark />
      <Group className="w-[166px] pl-2">
        <Col className="w-[83px]">
          <Tool icon={uniteIcon} label="Unite" muted />
          <Tool icon={subtractIcon} label="Subtract" muted />
          <Tool icon={intersectIcon} label="Intersect" muted />
        </Col>
        <Col>
          <Tool icon={splitIcon} label="Split" muted />
          <Tool icon={imprintIcon} label="Imprint" muted />
        </Col>
      </Group>
      <Line dark />
      <Group className="w-[38px] pl-[9px]">
        <Col>
          <IconTool icon={faceMoveIcon} label="Move faces" />
          <IconTool icon={faceOffsetIcon} label="Offset faces" />
          <IconTool icon={faceAlongIcon} label="Move faces along vector" />
        </Col>
      </Group>
      <Line dark />
      <Group className="w-[90px] pl-[9px]">
        <Col>
          <Tool icon={filletIcon} label="Fillet" muted />
          <Tool icon={chamferIcon} label="Chamfer" muted />
        </Col>
      </Group>
      <Line dark />
      <Group className="w-[43px] pl-2">
        <Col>
          <IconTool icon={tubeIcon} label="Sweep" caret />
          <IconTool icon={sheetIcon} label="Surface" caret />
          <IconTool icon={wireIcon} label="Edge" caret />
        </Col>
      </Group>
      <Line dark />
      <Group className="w-[49px] pl-2">
        <Col>
          <IconTool icon={csIcon} label="Relative CS" caret />
          <IconTool icon={csMuted} label="Set working CS" />
          <IconTool icon={csFaceIcon} label="Face CS" caret />
        </Col>
      </Group>
      <Line />
      <Group className="w-[104px] pl-1.5">
        <Col>
          <div className="px-[3px]">
            <Tool icon={measureIcon} label="Measure" caret />
          </div>
          <div className="bg-[#cfccd0] px-[3px]">
            <Tool icon={rulerIcon} label="Ruler" />
          </div>
          <div className="px-[3px]">
            <Tool label="Units" />
          </div>
        </Col>
      </Group>
      <Line />
      <Group className="w-[91px] pl-[7px]">
        <Col>
          <Tool icon={gridIcon} label="Grid" />
          <Combo label="Drawing plane" value="XY" className="w-20" />
          <Combo label="Movement mode" value="3D" className="w-20" />
        </Col>
      </Group>
      <Line />
      <Group className="w-[70px] pl-1.5">
        <Col className="h-[78px] bg-[#cdcbce] px-[3px]">
          <IconTool icon={snapGrid} label="Snap to grid" />
          <IconTool icon={snapVertex} label="Snap to vertex" />
          <IconTool icon={snapMid} label="Snap to edge center" />
        </Col>
        <Col>
          <div className="bg-[#cdcbce] px-[5px]">
            <IconTool icon={snapCenter} label="Snap to face center" />
            <IconTool icon={snapEdge} label="Snap to edge" />
          </div>
          <div className="px-[5px]">
            <IconTool icon={snapArc} label="Snap to arc center" />
          </div>
        </Col>
      </Group>
      <Line />
      <Group className="w-[100px] pl-1.5">
        <Col>
          <Combo label="Object type" value="Model" className="w-[90px]" />
          <Combo label="Material" value="vacuum" className="w-[90px]" />
          <IconTool icon={stackIcon} label="Assign material" />
        </Col>
      </Group>
    </div>

    {/* ribbon tabs */}
    <nav className="flex h-[27px] shrink-0 items-start bg-[#f0eef1] text-[#504d54]">
      <button className="h-[23px] w-[43px] text-left">View</button>
      <button className="-mt-px h-[24px] w-[60px] border border-t-0 border-[#cbc6d3] bg-[#f2eff5] text-[#2c5f96]">Draw</button>
      <div className="flex h-[23px] gap-[30px] pl-[14px]">
        {['Model', 'Simulation', 'Results', 'Automation'].map((t) => (
          <button key={t}>{t}</button>
        ))}
      </div>
    </nav>

    {/* workspace */}
    <main className={clsx('flex grow', texture)}>
      <div className="flex w-[266px] shrink-0 flex-col">
        <PanelHeader title="er" />
        <div className="h-[371px] bg-white pt-0.5 font-['Noto_Sans','Open_Sans',sans-serif] text-[12px] text-[#1c1c1c]">
          <ul>
            <li className="font-bold">dividual*</li>
            <li>(DrivenModal)*</li>
            <li className="w-[156px] bg-[#efecf1] font-bold">sponder (DrivenModal)*</li>
            {projectItems.map((p) => (
              <li key={p}>{p}</li>
            ))}
          </ul>
        </div>
        <div className="h-1.5" />
        <PanelHeader />
        <div className="flex grow flex-col bg-[#f8f7f9] pt-1.5 pr-[4px] pb-[8px]">
          <div className="grow border-t border-r-2 border-b-2 border-t-[#d6d3d8] border-r-[#77747a] border-b-[#77747a] bg-[#efeef1]" />
        </div>
      </div>

      <div className="ml-1.5 flex w-[328px] shrink-0 flex-col border-t-2 border-r-2 border-l border-[#77747a] bg-white">
        <div className="flex h-[772px] grow">
          <div className="w-[300px] shrink-0 overflow-hidden pt-px pl-px text-[14px] text-[#2f2d33]">
            <Rows nodes={modelNodes} guides={[true]} />
            <Rows nodes={rootNodes} guides={[]} />
          </div>
          <div className="flex w-[19px] flex-col items-center bg-[#f0eff1]">
            <button aria-label="Scroll up" className="flex h-[41px] items-start pt-2">
              <svg viewBox="0 0 10 7" className="h-[7px] w-[10px]" fill="none" stroke="#4b484f" strokeWidth="2" aria-hidden="true">
                <path d="M1 6l4-4 4 4" />
              </svg>
            </button>
            <div className="w-full grow bg-[#cdcbce]" />
            <button aria-label="Scroll down" className="flex h-[23px] items-center">
              <svg viewBox="0 0 10 7" className="h-[7px] w-[10px]" fill="none" stroke="#4b484f" strokeWidth="2" aria-hidden="true">
                <path d="M1 1l4 4 4-4" />
              </svg>
            </button>
          </div>
        </div>
        <div className="mb-0.5 flex h-5 items-center bg-[#f0eff1]">
          <button aria-label="Scroll left" className="flex w-[22px] justify-center">
            <svg viewBox="0 0 7 10" className="h-[10px] w-[7px]" fill="none" stroke="#4b484f" strokeWidth="2" aria-hidden="true">
              <path d="M6 1L2 5l4 4" />
            </svg>
          </button>
          <div className="h-5 w-[248px] bg-[#cdcbce]" />
          <button aria-label="Scroll right" className="flex w-9 justify-center">
            <svg viewBox="0 0 7 10" className="h-[10px] w-[7px]" fill="none" stroke="#4b484f" strokeWidth="2" aria-hidden="true">
              <path d="M1 1l4 4-4 4" />
            </svg>
          </button>
        </div>
      </div>

      <div className="relative grow overflow-hidden border-t-2 border-[#77747a] bg-white">
        <Model />
        <div className="absolute bottom-[3px] left-[375px] font-['Liberation_Sans',Arial,sans-serif] text-[12px] leading-[18px] text-black">
          <div className="ml-[3px] flex h-3 w-[440px] border border-black">
            <div className="w-1/2" />
            <div className="w-1/2 bg-black" />
          </div>
          <div className="mt-2 flex">
            <span className="w-[213px]">0</span>
            <span className="w-[219px]">100</span>
            <span>200 (mm)</span>
          </div>
        </div>
      </div>
    </main>

    <div className={clsx('flex h-[26px] shrink-0', texture)}>
      <button className="h-[26px] w-[103px] bg-[#55535a] pt-[3px] text-left whitespace-nowrap text-[#e8e8e8]">essage Manager</button>
    </div>

    <footer className="mb-[52px] flex h-7 shrink-0 items-end overflow-hidden bg-[#3d3b3c]">
      <span className="grow self-center pt-1 text-[#e8e8e8]">cted</span>
      <button className="mr-1.5 flex h-[23px] w-[143px] shrink-0 items-center gap-2 bg-[#cfe3fa] pl-1 text-[#1f2a38]">
        <Icon className="size-4">
          <path d="M10 2l7 15H3z" fill="#f3d13c" stroke="#a08a2a" />
          <path d="M10 7v5M10 13.500v2" stroke="#222" strokeWidth="2" />
        </Icon>
        Hide 1 Messages
      </button>
      <button className="flex h-[23px] w-[34px] shrink-0 items-center gap-1.5 bg-[#cfe3fa] pl-1 whitespace-nowrap text-[#1f2a38]">
        <Icon className="size-4">
          <path d="M3 6h12v4H6v3H3z" fill="#5aa868" />
        </Icon>
        H
      </button>
    </footer>
  </div>
);

export default App;
